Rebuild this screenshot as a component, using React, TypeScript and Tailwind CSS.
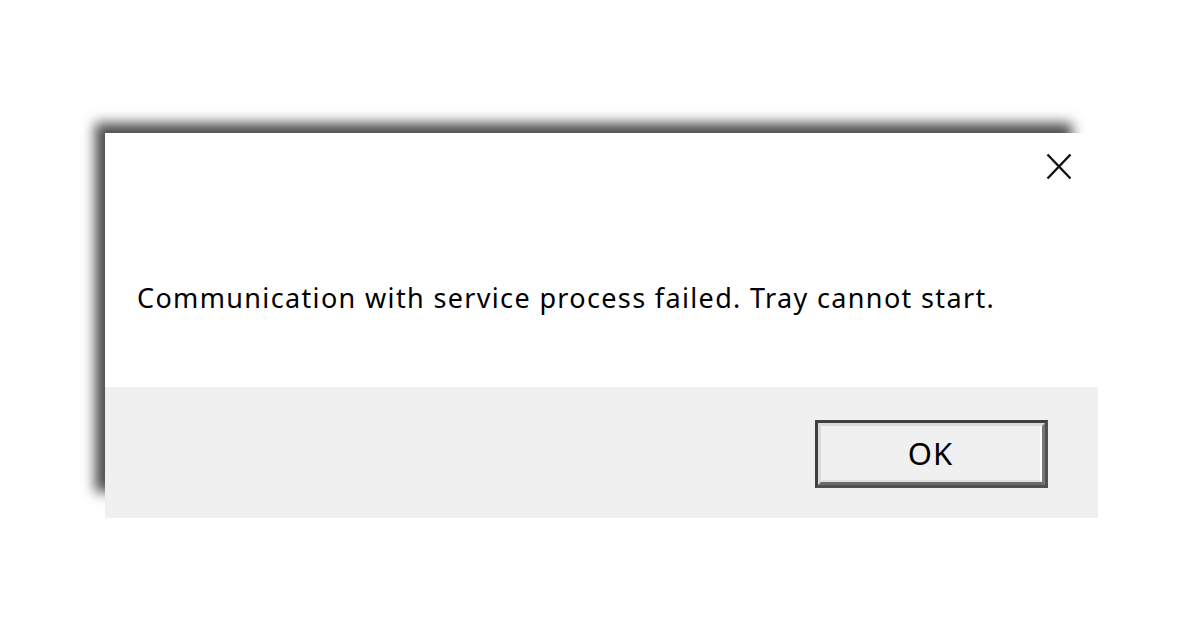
import React from "react";

export default function App() {
  return (
    <div className="w-[1200px] h-[627px] bg-white overflow-hidden pl-[105px] pt-[133px]" style={{ fontFamily: '"Noto Sans", "Open Sans", sans-serif' }}>
      <div className="w-[993px] h-[385px] flex flex-col shadow-[-18px_-18px_12px_-8px_rgba(0,0,0,0.7)]">
        <div className="relative h-[254px] bg-white pl-[32px] pt-[147px]">
          <svg className="absolute right-[26px] top-[20px]" width="26" height="27" viewBox="0 0 26 27">
            <path d="M1.5 1.5 L24.5 25.5 M24.5 1.5 L1.5 25.5" stroke="#111" strokeWidth="2.4" fill="none" />
          </svg>
          <p className="text-[27px] leading-[36px] tracking-[1.35px] text-black whitespace-nowrap">
            Communication with service process failed. Tray cannot start.
          </p>
        </div>
        <div className="h-[131px] bg-[#f0f0f0] flex justify-end items-start pt-[33px] pr-[50px]">
          <div className="w-[233px] h-[68px] border-[3px] border-t-[#404040] border-l-[#404040] border-r-[#505050] border-b-[#505050]">
            <div className="w-full h-full border-t-[3px] border-l-[3px] border-r-[3px] border-b-[3px] border-t-[#dadada] border-l-[#dadada] border-r-[#777777] border-b-[#6a6a6a]">
              <div className="w-full h-full border-r-2 border-b-2 border-r-white border-b-[#e0e0e0] flex items-center justify-center">
                <span className="text-[31px] leading-none tracking-[1px] text-black">OK</span>
              </div>
            </div>
          </div>
        </div>
      </div>
    </div>
  );
}
